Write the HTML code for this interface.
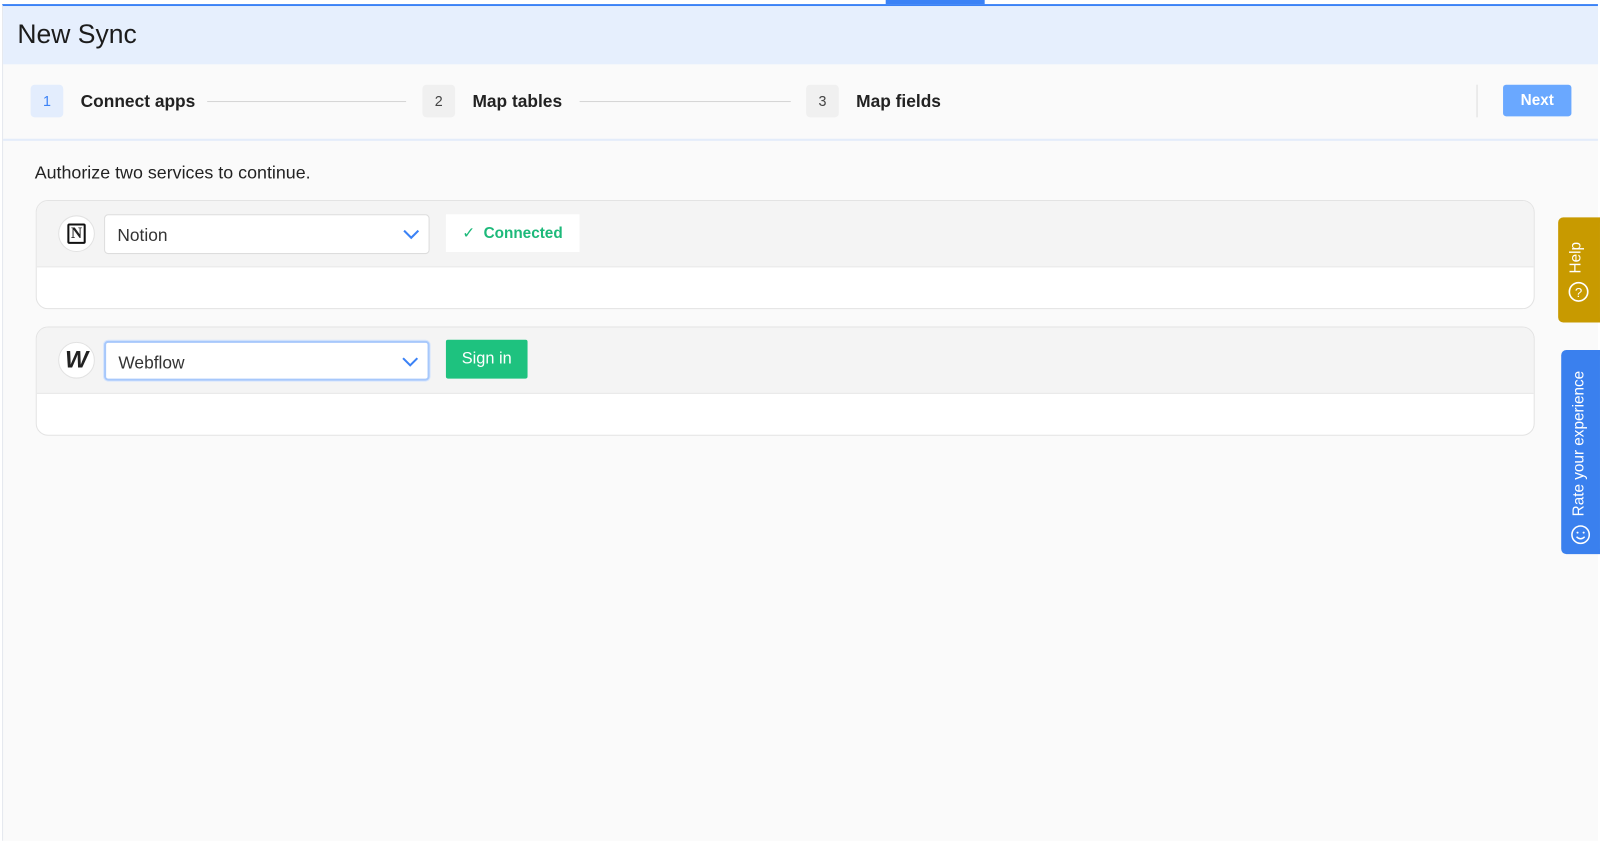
<!DOCTYPE html>
<html><head><style>
*{box-sizing:border-box;margin:0;padding:0}
body{width:1600px;height:841px;background:#fff;font-family:"Liberation Sans",sans-serif;overflow:hidden;color:#222}
.wrap{position:absolute;left:0;top:0;width:1568px;height:824px;transform:scale(1.0204);transform-origin:0 0}
.main{position:absolute;left:2px;top:4px;width:1564px;height:820px;background:#fafafa;border-top:2px solid #3b82f6;border-left:1px solid #e6e9ef}
.hd{height:57px;background:#e6effd;padding:12px 14px;font-size:26px;color:#1c1c1c}
.steps{height:75px;border-bottom:2px solid #e3ecfa;position:relative}
.num{position:absolute;top:20px;width:32px;height:32px;border-radius:4px;background:#f0f0f0;font-size:14px;text-align:center;line-height:32px;color:#444}
.lbl{position:absolute;top:27px;font-size:17px;font-weight:bold;color:#222}
.line{position:absolute;top:36px;height:1px;background:#d6d6d6}
.next{position:absolute;left:1470px;top:20px;width:67px;height:31px;background:#6aa8ff;color:#fff;border-radius:3px;font-weight:bold;font-size:15px;text-align:center;line-height:31px}
.txt{position:absolute;left:31px;top:153px;font-size:17.5px;color:#222}
.card{position:absolute;left:32px;width:1469px;height:107px;border:1px solid #e3e3e3;border-radius:12px;background:#fff;overflow:hidden}
.ch{height:65px;background:#f4f4f4;border-bottom:1px solid #e8e8e8;position:relative}
.ico{position:absolute;left:21px;top:14px;width:36px;height:36px;border-radius:50%;background:#fff;border:1px solid #e2e2e2;text-align:center;line-height:34px;font-weight:bold}
.sel{position:absolute;left:66px;top:13px;width:319px;height:39px;background:#fff;border:1px solid #ddd;border-radius:4px;font-size:17px;padding:10px 12px;color:#333}
.sel svg{position:absolute;right:8px;top:13px}
.tab{position:absolute;color:#fff;border-radius:5px 0 0 5px;font-size:15px}
</style></head><body><div class="wrap">
<div style="position:absolute;left:868px;top:0;width:97px;height:5px;background:#3b82f6"></div>
<div class="main">
<div class="hd">New Sync</div>
<div class="steps">
<div class="num" style="left:27px;background:#e3edfd;color:#3b82f6">1</div><div class="lbl" style="left:76px">Connect apps</div>
<div class="line" style="left:200px;width:195px"></div>
<div class="num" style="left:411px">2</div><div class="lbl" style="left:460px">Map tables</div>
<div class="line" style="left:565px;width:207px"></div>
<div class="num" style="left:787px">3</div><div class="lbl" style="left:836px">Map fields</div>
<div style="position:absolute;left:1444px;top:20px;width:1px;height:32px;background:#ddd"></div>
<div class="next">Next</div>
</div>
<div class="txt">Authorize two services to continue.</div>
<div class="card" style="top:190px"><div class="ch">
<div class="ico" style="font-family:'Liberation Serif',serif;font-size:15px"><span style="border:2px solid #111;border-radius:2px;padding:0 2px">N</span></div>
<div class="sel">Notion<svg width="18" height="12"><path d="M2 2l7 7 7-7" stroke="#3b82f6" stroke-width="2" fill="none"/></svg></div>
<div style="position:absolute;left:401px;top:13px;width:131px;height:37px;background:#fff;color:#1db97a;font-weight:bold;font-size:15px;line-height:37px;padding-left:16px"><span style="font-weight:normal">✓</span>&nbsp; Connected</div>
</div></div>
<div class="card" style="top:314px"><div class="ch">
<div class="ico" style="font-size:24px;font-style:italic;font-family:'Liberation Sans',sans-serif;font-weight:900">W</div>
<div class="sel" style="border:2px solid #a7c8fb;box-shadow:0 0 0 1px #d6e5fd">Webflow<svg width="18" height="12"><path d="M2 2l7 7 7-7" stroke="#3b82f6" stroke-width="2" fill="none"/></svg></div>
<div style="position:absolute;left:401px;top:12px;width:80px;height:38px;background:#1ec27f;color:#fff;border-radius:2px;font-size:16px;text-align:center;line-height:38px">Sign in</div>
</div></div>
</div>
<div class="tab" style="left:1527px;top:213px;width:41px;height:103px;background:#c89a00">
<div style="position:absolute;left:9px;top:55px;transform:rotate(-90deg);transform-origin:left top;width:50px">Help</div>
<svg style="position:absolute;left:9px;top:62px" width="22" height="22"><circle cx="11" cy="11" r="9" stroke="#fff" stroke-width="1.6" fill="none"/><text x="11" y="16" fill="#fff" font-size="13" text-anchor="middle" font-family="Liberation Sans">?</text></svg>
</div>
<div class="tab" style="left:1530px;top:343px;width:38px;height:200px;background:#3a80ee">
<div style="position:absolute;left:9px;top:163px;transform:rotate(-90deg);transform-origin:left top;width:160px;white-space:nowrap">Rate your experience</div>
<svg style="position:absolute;left:8px;top:170px" width="22" height="22"><circle cx="11" cy="11" r="8.5" stroke="#fff" stroke-width="1.5" fill="none"/><circle cx="8" cy="9" r="1" fill="#fff"/><circle cx="14" cy="9" r="1" fill="#fff"/><path d="M7 13q4 4 8 0" stroke="#fff" stroke-width="1.4" fill="none"/></svg>
</div>
</div></body></html>
